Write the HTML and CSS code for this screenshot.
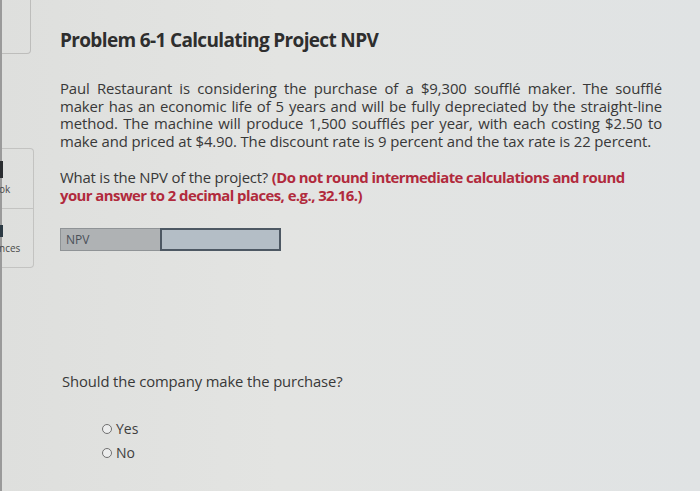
FILE: index.html
```html
<!DOCTYPE html>
<html>
<head>
<meta charset="utf-8">
<link rel="stylesheet" href="styles.css">
</head>
<body>
<div class="page">
  <aside class="side">
    <div class="card card-top"></div>
    <div class="card card-group">
      <div class="item"><span class="ico"></span><span class="lbl">ok</span></div>
      <div class="item"><span class="ico"></span><span class="lbl">nces</span></div>
    </div>
  </aside>
  <main class="main">
    <h1 class="title">Problem 6-1 Calculating Project NPV</h1>
    <p class="para">Paul Restaurant is considering the purchase of a $9,300 soufflé maker. The soufflé maker has an economic life of 5 years and will be fully depreciated by the <span class="nw">straight-line</span> method. The machine will produce 1,500 soufflés per year, with each costing $2.50 to make and priced at $4.90. The discount rate is 9 percent and the tax rate is 22 percent.</p>
    <p class="q">What is the NPV of the project? <span class="red">(Do not round intermediate calculations and round your answer to 2 decimal places, e.g., 32.16.)</span></p>
    <div class="npv">
      <div class="npv-label">NPV</div>
      <div class="npv-input"></div>
    </div>
    <p class="q2">Should the company make the purchase?</p>
    <div class="radios">
      <label class="radio"><span class="dot"></span>Yes</label>
      <label class="radio"><span class="dot"></span>No</label>
    </div>
  </main>
</div>
</body>
</html>
```
FILE: styles.css
```css
html, body {
  margin: 0;
  padding: 0;
}
body {
  width: 700px;
  height: 491px;
  overflow: hidden;
  background: linear-gradient(90deg, #dedfdd 0%, #e3e4e2 40%, #e0e3e4 100%);
  font-family: "Open Sans", "Noto Sans", "Liberation Sans", sans-serif;
  color: #3c3c3c;
}
.page {
  display: flex;
  height: 491px;
}
.side {
  width: 31px;
  flex: none;
  border-left: 2px solid #9a9a9a;
  box-sizing: border-box;
}
.card {
  border: 1px solid #c3c3c1;
  border-left: none;
  border-radius: 0 4px 4px 0;
}
.card-top {
  height: 56px;
  margin-top: -4px;
  width: 28px;
  border-color: #bdbdbb;
}
.card-group {
  margin-top: 94px;
  width: 31px;
}
.item {
  height: 59px;
  position: relative;
  display: flex;
  flex-direction: column;
  justify-content: flex-end;
  padding-bottom: 12px;
  box-sizing: border-box;
}
.item + .item {
  border-top: 1px solid #c3c3c1;
}
.ico {
  position: absolute;
  left: -2px;
  top: 12px;
  width: 3px;
  height: 17px;
  background: #2a2d30;
}
.item + .item .ico {
  top: 16px;
  height: 12px;
  background: #2c3a44;
}
.lbl {
  font-size: 10px;
  color: #4a4a4a;
  margin-left: -3px;
}
.main {
  flex: 1;
  padding-left: 29px;
  padding-right: 38px;
}
.title {
  margin: 28px 0 0;
  font-size: 19px;
  font-weight: 700;
  color: #2e2e2e;
  letter-spacing: -0.65px;
  line-height: 24px;
}
.para {
  margin: 28px 0 0;
  font-size: 14.9px;
  line-height: 17.7px;
  text-align: justify;
  color: #383838;
  letter-spacing: -0.1px;
}
.nw {
  white-space: nowrap;
}
.q {
  margin: 18px 0 0;
  padding-right: 30px;
  font-size: 14.9px;
  line-height: 17.7px;
  color: #383838;
  letter-spacing: -0.2px;
}
.red {
  color: #b12a3c;
  font-weight: 700;
  letter-spacing: -0.55px;
}
.npv {
  display: flex;
  margin-top: 24px;
  width: 221px;
  height: 23px;
  border: 1px solid #8f9396;
  box-sizing: border-box;
}
.npv-label {
  width: 99px;
  background: #afb2b4;
  font-size: 12px;
  color: #4a5058;
  padding: 2px 0 0 5px;
  box-sizing: border-box;
}
.npv-input {
  flex: 1;
  background: #b4bec6;
  border: 2px solid #4d5863;
  margin: -1px -1px -1px 0;
}
.q2 {
  margin: 121px 0 0 2px;
  font-size: 14.8px;
  line-height: 18px;
  color: #383838;
  letter-spacing: -0.1px;
}
.radios {
  margin: 30px 0 0 42px;
  display: flex;
  flex-direction: column;
  gap: 6px;
}
.radio {
  display: flex;
  align-items: center;
  font-size: 14px;
  line-height: 18px;
  color: #3e3e3e;
}
.dot {
  width: 10px;
  height: 10px;
  border: 1.5px solid #707070;
  border-radius: 50%;
  box-sizing: border-box;
  margin-right: 4px;
  background: #eceded;
}
```
